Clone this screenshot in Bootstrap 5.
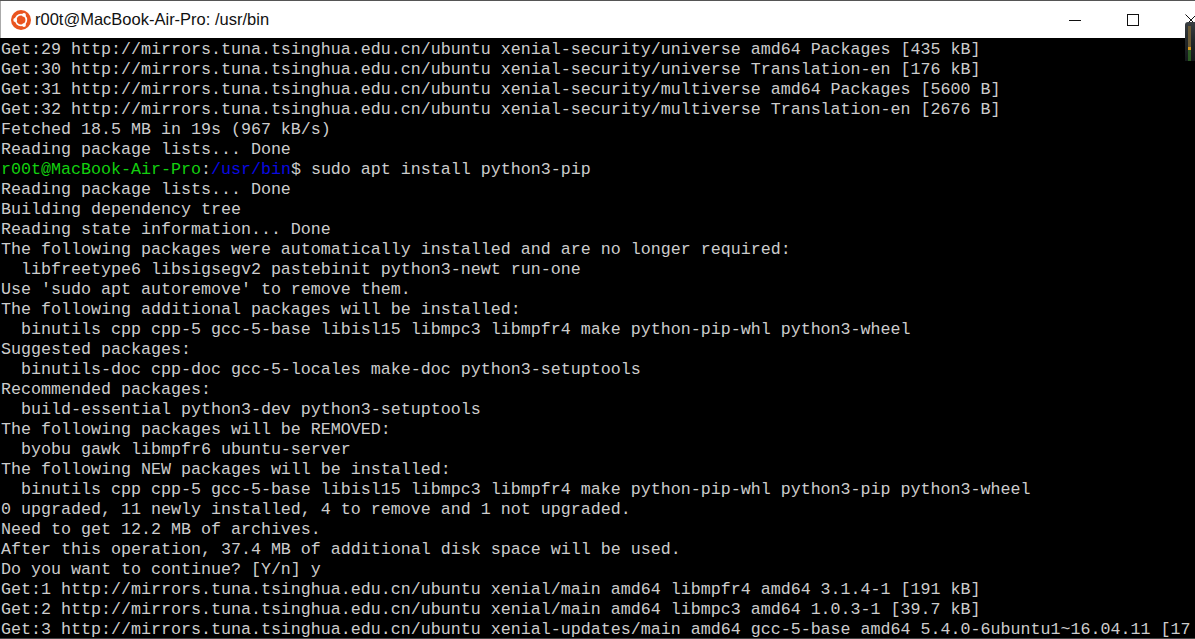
<!DOCTYPE html>
<html lang="en">
<head>
<meta charset="utf-8">
<title>r00t@MacBook-Air-Pro: /usr/bin</title>
<link href="https://cdn.jsdelivr.net/npm/bootstrap@5.3.0/dist/css/bootstrap.min.css" rel="stylesheet">
<style>
html,body{height:100%;overflow:hidden;background:#000}
.term-window{height:639px;width:1195px;border-top:1px solid #555;overflow:hidden;position:relative}
.term-title{height:37px;background:#fff;color:#111;font:16.5px "Liberation Sans",sans-serif;padding:0 0 0 10px;border-left:1px solid #aaa}
.term-title svg{flex:none}
.term-name{margin-left:4px}
.win-btn{width:58px;display:flex;justify-content:center}
.win-btns{margin-right:-25px}
.term-body{margin:0;padding:2px 0 0 1px;background:#000;color:#ccc;font:16.67px/20px "Liberation Mono",monospace;white-space:pre;overflow:hidden;flex:1;border-bottom:1px solid #444}
.pr-user{color:#13cf0f}
.pr-path{color:#0a0ae0}
.side-thumb{position:absolute;right:0;top:21px;width:10px;height:39px;background:linear-gradient(#3a3f42,#23282a 45%,#14181a);border-radius:3px 0 0 0}
.side-thumb::before{content:"";position:absolute;left:3px;top:4px;width:3px;height:35px;background:linear-gradient(#6a5a36 0 60%,#2f5a26 64%,#2a5a22)}
.side-thumb::after{content:"";position:absolute;left:3px;top:25px;width:3px;height:3px;background:#d8981c}
</style>
</head>
<body>
<div class="term-window d-flex flex-column">
<div class="term-title d-flex align-items-center">
<svg width="20" height="20" viewBox="0 0 21 21"><circle cx="10.500" cy="10.500" r="10.500" fill="#e9541f"/><circle cx="10.500" cy="10.500" r="5.600" fill="none" stroke="#fff" stroke-width="1.800"/><circle cx="4.400" cy="10.500" r="2" fill="#fff"/><circle cx="13.600" cy="5.200" r="2" fill="#fff"/><circle cx="13.600" cy="15.800" r="2" fill="#fff"/></svg>
<span class="term-name flex-grow-1">r00t@MacBook-Air-Pro: /usr/bin</span>
<div class="win-btns d-flex">
<div class="win-btn"><svg width="12" height="12" viewBox="0 0 12 12"><path d="M0 6.500h12" stroke="#111"/></svg></div>
<div class="win-btn"><svg width="12" height="12" viewBox="0 0 12 12"><rect x=".5" y=".5" width="11" height="11" fill="none" stroke="#111"/></svg></div>
<div class="win-btn"><svg width="12" height="12" viewBox="0 0 12 12"><path d="M.5.500l11 11M11.500.500l-11 11" stroke="#111"/></svg></div>
</div>
</div>
<pre class="term-body">Get:29 http://mirrors.tuna.tsinghua.edu.cn/ubuntu xenial-security/universe amd64 Packages [435 kB]
Get:30 http://mirrors.tuna.tsinghua.edu.cn/ubuntu xenial-security/universe Translation-en [176 kB]
Get:31 http://mirrors.tuna.tsinghua.edu.cn/ubuntu xenial-security/multiverse amd64 Packages [5600 B]
Get:32 http://mirrors.tuna.tsinghua.edu.cn/ubuntu xenial-security/multiverse Translation-en [2676 B]
Fetched 18.5 MB in 19s (967 kB/s)
Reading package lists... Done
<span class="pr-user">r00t@MacBook-Air-Pro</span>:<span class="pr-path">/usr/bin</span>$ sudo apt install python3-pip
Reading package lists... Done
Building dependency tree
Reading state information... Done
The following packages were automatically installed and are no longer required:
  libfreetype6 libsigsegv2 pastebinit python3-newt run-one
Use 'sudo apt autoremove' to remove them.
The following additional packages will be installed:
  binutils cpp cpp-5 gcc-5-base libisl15 libmpc3 libmpfr4 make python-pip-whl python3-wheel
Suggested packages:
  binutils-doc cpp-doc gcc-5-locales make-doc python3-setuptools
Recommended packages:
  build-essential python3-dev python3-setuptools
The following packages will be REMOVED:
  byobu gawk libmpfr6 ubuntu-server
The following NEW packages will be installed:
  binutils cpp cpp-5 gcc-5-base libisl15 libmpc3 libmpfr4 make python-pip-whl python3-pip python3-wheel
0 upgraded, 11 newly installed, 4 to remove and 1 not upgraded.
Need to get 12.2 MB of archives.
After this operation, 37.4 MB of additional disk space will be used.
Do you want to continue? [Y/n] y
Get:1 http://mirrors.tuna.tsinghua.edu.cn/ubuntu xenial/main amd64 libmpfr4 amd64 3.1.4-1 [191 kB]
Get:2 http://mirrors.tuna.tsinghua.edu.cn/ubuntu xenial/main amd64 libmpc3 amd64 1.0.3-1 [39.7 kB]
Get:3 http://mirrors.tuna.tsinghua.edu.cn/ubuntu xenial-updates/main amd64 gcc-5-base amd64 5.4.0-6ubuntu1~16.04.11 [17</pre>
<div class="side-thumb"></div>
</div>
<script src="https://cdn.jsdelivr.net/npm/bootstrap@5.3.0/dist/js/bootstrap.bundle.min.js"></script>
</body>
</html>
